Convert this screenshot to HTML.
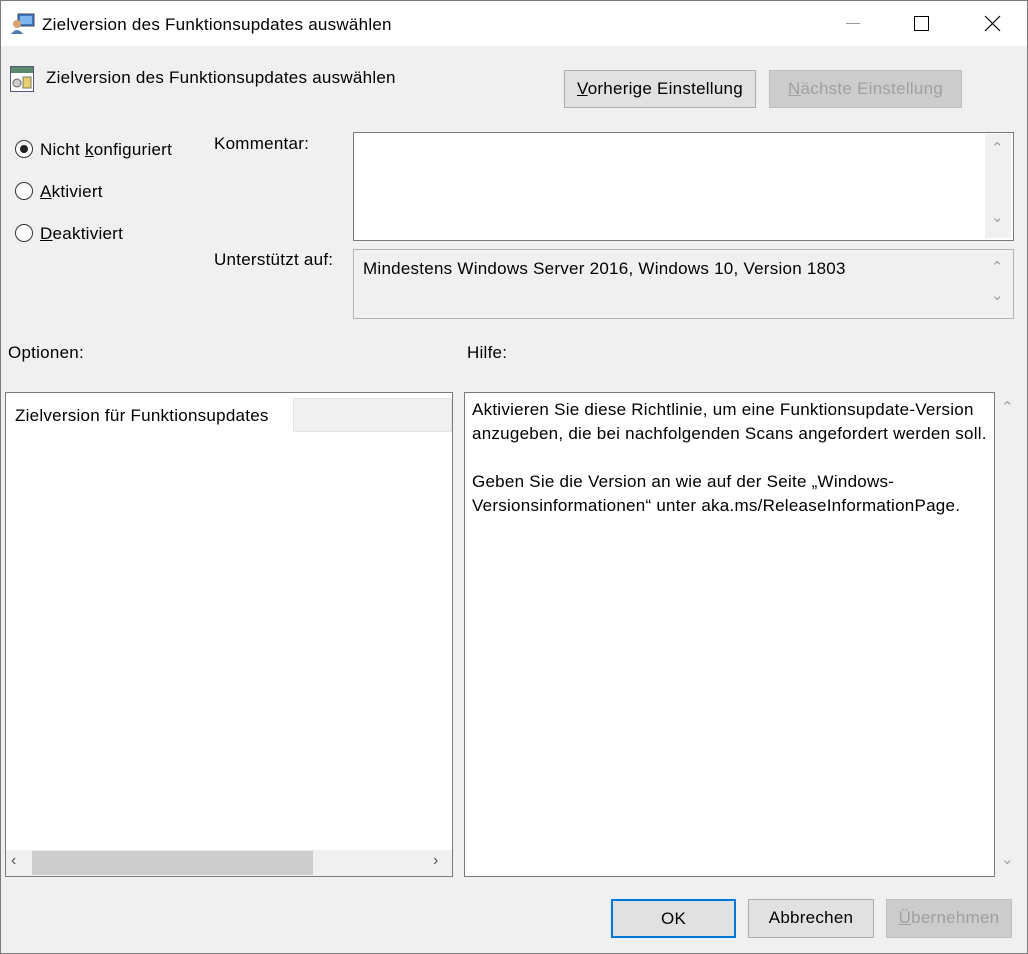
<!DOCTYPE html>
<html><head><meta charset="utf-8"><style>
*{box-sizing:border-box;margin:0;padding:0}
body{width:1028px;height:954px;overflow:hidden;font-family:"Liberation Sans",sans-serif;font-size:17px;letter-spacing:0.25px;color:#000;background:#f0f0f0;position:relative}
.a{position:absolute}
.win{left:0;top:0;width:1028px;height:954px;border:1px solid #7a7a7a}
.title{left:1px;top:1px;width:1026px;height:45px;background:#fff}
.btn{position:absolute;background:#e1e1e1;border:1px solid #adadad;text-align:center;line-height:36px}
.dis{background:#cccccc;border-color:#bfbfbf;color:#a0a0a0}
.rad{position:absolute;width:18px;height:18px;border:1.5px solid #333;border-radius:50%;background:#fff}
.sb{position:absolute;color:#a0a0a0;font-size:15px}
</style></head><body>
<div class="a win"></div>
<div class="a title"></div>
<svg class="a" style="left:10px;top:12px" width="26" height="24" viewBox="0 0 26 24"><rect x="8" y="2" width="16" height="12" fill="#3a78c8" stroke="#445"/><rect x="10" y="4" width="12" height="8" fill="#7fb6ee"/><circle cx="7" cy="12" r="4" fill="#d9a070"/><path d="M1 22 Q7 14 13 22Z" fill="#4d7cb0"/></svg>
<div class="a" style="left:42px;top:15px">Zielversion des Funktionsupdates auswählen</div>
<div class="a" style="left:846px;top:23px;width:14px;height:1px;background:#999"></div>
<div class="a" style="left:914px;top:16px;width:15px;height:15px;border:1px solid #000"></div>
<svg class="a" style="left:984px;top:15px" width="17" height="17"><path d="M1 1L16 16M16 1L1 16" stroke="#000" stroke-width="1.2"/></svg>
<svg class="a" style="left:10px;top:66px" width="24" height="26" viewBox="0 0 24 26"><rect x="0.5" y="0.5" width="23" height="25" fill="#fff" stroke="#557"/><rect x="1" y="1" width="22" height="6" fill="#5a8a6a"/><circle cx="7" cy="17" r="4" fill="#ccc" stroke="#666"/><rect x="13" y="11" width="8" height="11" fill="#e8d070" stroke="#776"/></svg>
<div class="a" style="left:46px;top:68px">Zielversion des Funktionsupdates auswählen</div>
<div class="btn" style="left:564px;top:70px;width:192px;height:38px"><u>V</u>orherige Einstellung</div>
<div class="btn dis" style="left:769px;top:70px;width:193px;height:38px"><u>N</u>ächste Einstellung</div>
<div class="rad" style="left:15px;top:140px"></div><div class="a" style="left:20px;top:145px;width:8px;height:8px;border-radius:50%;background:#222"></div>
<div class="a" style="left:40px;top:140px">Nicht <u>k</u>onfiguriert</div>
<div class="rad" style="left:15px;top:182px"></div><div class="a" style="left:40px;top:182px"><u>A</u>ktiviert</div>
<div class="rad" style="left:15px;top:224px"></div><div class="a" style="left:40px;top:224px"><u>D</u>eaktiviert</div>
<div class="a" style="left:214px;top:134px">Kommentar:</div>
<div class="a" style="left:353px;top:132px;width:661px;height:109px;background:#fff;border:1px solid #7a7a7a"></div>
<div class="a" style="left:985px;top:134px;width:26px;height:104px;background:#f0f0f0"></div>
<div class="sb" style="left:991px;top:139px">&#8963;</div><div class="sb" style="left:991px;top:208px">&#8964;</div>
<div class="a" style="left:214px;top:250px">Unterstützt auf:</div>
<div class="a" style="left:353px;top:249px;width:661px;height:70px;background:#f0f0f0;border:1px solid #b4b4b4"></div>
<div class="a" style="left:363px;top:259px">Mindestens Windows Server 2016, Windows 10, Version 1803</div>
<div class="sb" style="left:991px;top:258px">&#8963;</div><div class="sb" style="left:991px;top:286px">&#8964;</div>
<div class="a" style="left:8px;top:343px">Optionen:</div>
<div class="a" style="left:467px;top:343px">Hilfe:</div>
<div class="a" style="left:5px;top:392px;width:448px;height:485px;background:#fff;border:1px solid #7a7a7a"></div>
<div class="a" style="left:15px;top:406px">Zielversion für Funktionsupdates</div>
<div class="a" style="left:293px;top:398px;width:159px;height:34px;background:#f0f0f0;border:1px solid #e3e3e3"></div>
<div class="a" style="left:6px;top:850px;width:446px;height:26px;background:#f0f0f0"></div>
<div class="a" style="left:32px;top:851px;width:281px;height:24px;background:#cdcdcd"></div>
<div class="a" style="left:11px;top:852px;font-size:16px;color:#555">&lsaquo;</div>
<div class="a" style="left:433px;top:852px;font-size:16px;color:#555">&rsaquo;</div>
<div class="a" style="left:464px;top:392px;width:531px;height:485px;background:#fff;border:1px solid #7a7a7a"></div>
<div class="a" style="left:472px;top:398px;line-height:24px;width:525px;white-space:nowrap">Aktivieren Sie diese Richtlinie, um eine Funktionsupdate-Version<br>anzugeben, die bei nachfolgenden Scans angefordert werden soll.<br><br>Geben Sie die Version an wie auf der Seite „Windows-<br>Versionsinformationen“ unter aka.ms/ReleaseInformationPage.</div>
<div class="sb" style="left:1001px;top:398px">&#8963;</div><div class="sb" style="left:1001px;top:850px">&#8964;</div>
<div class="btn" style="left:611px;top:899px;width:125px;height:39px;border:2px solid #0078d7;line-height:35px">OK</div>
<div class="btn" style="left:748px;top:899px;width:126px;height:39px">Abbrechen</div>
<div class="btn dis" style="left:886px;top:899px;width:126px;height:39px"><u>Ü</u>bernehmen</div>
</body></html>
